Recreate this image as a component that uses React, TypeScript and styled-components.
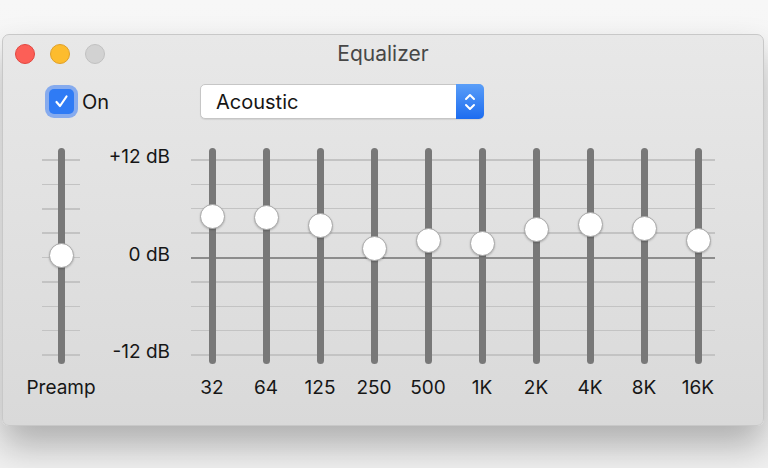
import styled, { createGlobalStyle } from "styled-components";

const GlobalStyle = createGlobalStyle`
  html, body {
    margin: 0;
    padding: 0;
    background: #f4f4f4;
  }
  body {
    font-family: Inter, "Liberation Sans", sans-serif;
    -webkit-font-smoothing: antialiased;
  }
`;

const Page = styled.div`
  width: 768px;
  height: 468px;
  box-sizing: border-box;
  padding: 34px 4px 0 2px;
  background: linear-gradient(#f7f7f7, #f1f1f1);
  overflow: hidden;
`;

const Window = styled.div`
  height: 392px;
  box-sizing: border-box;
  border: 1px solid #c8c8c8;
  border-radius: 7px;
  background: linear-gradient(#e8e8e8, #d9d9d9);
  box-shadow: 0 20px 36px rgba(0, 0, 0, 0.28);
`;

const TitleBar = styled.div`
  height: 37px;
  display: grid;
  grid-template-columns: 1fr auto 1fr;
  align-items: center;
  padding: 0 12px;
`;

const Lights = styled.div`
  display: flex;
  gap: 15px;
`;

const Light = styled.span<{ $fill: string; $edge: string }>`
  width: 20px;
  height: 20px;
  border-radius: 50%;
  box-sizing: border-box;
  background: ${(p) => p.$fill};
  border: 1px solid ${(p) => p.$edge};
`;

const Title = styled.div`
  font-size: 21px;
  color: #474747;
`;

const Controls = styled.div`
  height: 35px;
  margin-top: 12px;
  padding-left: 46px;
  display: grid;
  grid-template-columns: 151px 284px;
  align-items: center;
`;

const Toggle = styled.label`
  display: flex;
  align-items: center;
  gap: 8px;
  font-size: 20px;
  color: #161616;
`;

const CheckBox = styled.span`
  width: 25px;
  height: 25px;
  border-radius: 5px;
  background: #2f7bf5;
  box-shadow: 0 0 0 4px #86abee;
  display: flex;
  align-items: center;
  justify-content: center;
`;

const Popup = styled.div`
  height: 35px;
  box-sizing: border-box;
  display: flex;
  align-items: stretch;
  background: #fff;
  border: 1px solid #c6c6c6;
  border-radius: 5px;
  box-shadow: 0 1px 1px rgba(0, 0, 0, 0.08);
`;

const PopupText = styled.div`
  flex: 1;
  display: flex;
  align-items: center;
  padding-left: 15px;
  font-size: 20px;
  color: #161616;
`;

const Stepper = styled.div`
  width: 28px;
  margin: -1px -1px -1px 0;
  border-radius: 0 5px 5px 0;
  background: linear-gradient(#5a9ef8, #1c6cf0);
  display: flex;
  align-items: center;
  justify-content: center;
`;

const EqGrid = styled.div`
  margin-top: 29px;
  padding-left: 39px;
  display: grid;
  grid-template-columns: 38px 105px 540px;
  grid-template-rows: 216px 24px;
  row-gap: 12px;
`;

const SliderCell = styled.div`
  display: grid;
`;

const Ruler = styled.div<{ $inset?: string }>`
  grid-area: 1 / 1;
  margin: ${(p) => p.$inset ?? "0"};
  display: flex;
  flex-direction: column;
  justify-content: space-between;
  padding: 11.25px 0 8.25px;
`;

const Tick = styled.div<{ $strong?: boolean }>`
  height: ${(p) => (p.$strong ? "2px" : "1.5px")};
  background: ${(p) => (p.$strong ? "#8c8c8c" : "#c3c3c3")};
`;

const Bands = styled.div`
  grid-area: 1 / 1;
  display: flex;
`;

const Band = styled.div`
  width: 54px;
  display: flex;
  justify-content: center;
`;

const Track = styled.div`
  position: relative;
  width: 7px;
  height: 216px;
  border-radius: 4px;
  background: #787878;
  justify-self: center;
  grid-area: 1 / 1;
`;

const Knob = styled.div`
  position: absolute;
  left: 50%;
  width: 25px;
  height: 25px;
  margin-left: -12.5px;
  box-sizing: border-box;
  border-radius: 50%;
  background: #fff;
  border: 1px solid #a8a8a8;
  box-shadow: 0 1px 2px rgba(0, 0, 0, 0.22);
`;

const DbScale = styled.div`
  align-self: end;
  height: 219px;
  padding-right: 15px;
  display: flex;
  flex-direction: column;
  justify-content: space-between;
  align-items: flex-end;
  font-size: 19px;
  color: #161616;
`;

const DbLabel = styled.div`
  line-height: 24px;
  white-space: nowrap;
`;

const Caption = styled.div`
  display: flex;
  justify-content: center;
  font-size: 19px;
  line-height: 24px;
  color: #161616;
  white-space: nowrap;
`;

const CaptionRow = styled.div`
  display: flex;
`;

const bands = [
  { label: "32", db: 5 },
  { label: "64", db: 4.9 },
  { label: "125", db: 3.95 },
  { label: "250", db: 1.05 },
  { label: "500", db: 2.15 },
  { label: "1K", db: 1.75 },
  { label: "2K", db: 3.5 },
  { label: "4K", db: 4.1 },
  { label: "8K", db: 3.55 },
  { label: "16K", db: 2.15 },
];

// knob centre from gain: +12 dB at 12px, -12 dB at 207px
const knobTop = (db: number) => 12 + ((12 - db) / 24) * 195 - 12.5;

const Slider = ({ db }: { db: number }) => (
  <Track>
    <Knob style={{ top: knobTop(db) }} />
  </Track>
);

const Lines = ({ inset, strongMid }: { inset?: string; strongMid?: boolean }) => (
  <Ruler $inset={inset}>
    {Array.from({ length: 9 }).map((_, i) => (
      <Tick key={i} $strong={strongMid && i === 4} />
    ))}
  </Ruler>
);

export default function App() {
  return (
    <Page>
      <GlobalStyle />
      <Window>
        <TitleBar>
          <Lights>
            <Light $fill="#fc5f57" $edge="#e2463f" />
            <Light $fill="#fdbc2e" $edge="#e0a028" />
            <Light $fill="#d2d2d2" $edge="#c1c1c1" />
          </Lights>
          <Title>Equalizer</Title>
          <div />
        </TitleBar>

        <Controls>
          <Toggle>
            <CheckBox>
              <svg width="17" height="17" viewBox="0 0 17 17">
                <path
                  d="M3.5 9 L7 13 L13.5 3.5"
                  fill="none"
                  stroke="#fff"
                  strokeWidth="2.2"
                  strokeLinecap="round"
                  strokeLinejoin="round"
                />
              </svg>
            </CheckBox>
            On
          </Toggle>
          <Popup>
            <PopupText>Acoustic</PopupText>
            <Stepper>
              <svg width="14" height="22" viewBox="0 0 14 22">
                <path
                  d="M3 8 L7 4 L11 8 M3 14 L7 18 L11 14"
                  fill="none"
                  stroke="#fff"
                  strokeWidth="2"
                  strokeLinecap="round"
                  strokeLinejoin="round"
                />
              </svg>
            </Stepper>
          </Popup>
        </Controls>

        <EqGrid>
          <SliderCell>
            <Lines />
            <Slider db={0.2} />
          </SliderCell>
          <DbScale>
            <DbLabel>+12 dB</DbLabel>
            <DbLabel>0 dB</DbLabel>
            <DbLabel>-12 dB</DbLabel>
          </DbScale>
          <SliderCell>
            <Lines inset="0 10px 0 6px" strongMid />
            <Bands>
              {bands.map((b) => (
                <Band key={b.label}>
                  <Slider db={b.db} />
                </Band>
              ))}
            </Bands>
          </SliderCell>

          <Caption>Preamp</Caption>
          <div />
          <CaptionRow>
            {bands.map((b) => (
              <Band key={b.label}>
                <Caption>{b.label}</Caption>
              </Band>
            ))}
          </CaptionRow>
        </EqGrid>
      </Window>
    </Page>
  );
}
